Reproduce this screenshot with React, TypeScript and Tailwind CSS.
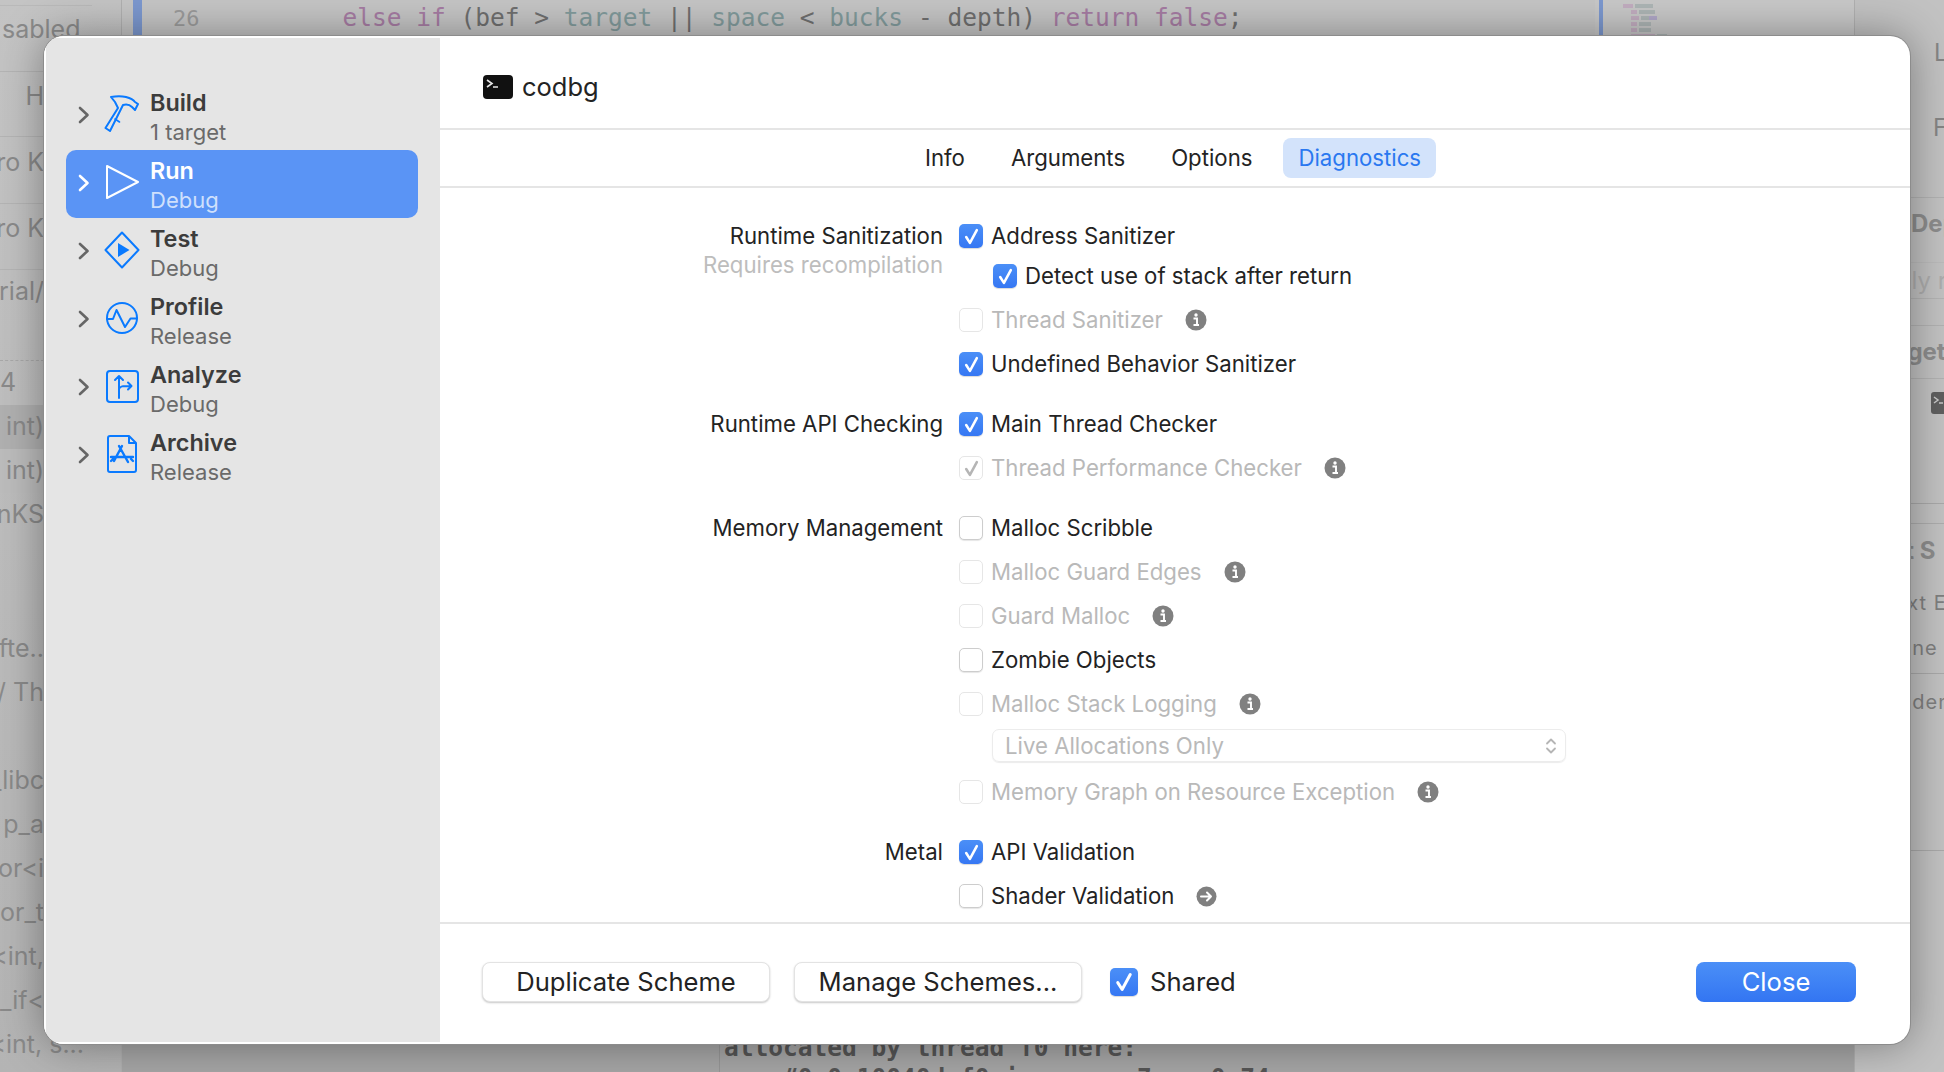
const side: { text: string; cls: string }[] = [
  { text: '', cls: 'h-[5px] w-[44px]' },
  { text: 'sabled', cls: 'h-[48px] w-[92px] !justify-start pl-[2px] border-t border-[#b9b9b9]' },
  { text: '', cls: 'h-[18px] w-[44px]' },
  { text: 'H', cls: 'h-[50px] w-[44px] border-t border-[#b4b4b4]' },
  { text: '', cls: 'h-[15px] w-[44px]' },
  { text: 'ro K', cls: 'h-[52px] w-[44px] border-t border-[#b4b4b4]' },
  { text: '', cls: 'h-[15px] w-[44px]' },
  { text: 'ro K', cls: 'h-[50px] w-[44px] border-t border-[#b4b4b4]' },
  { text: '', cls: 'h-[16px] w-[44px]' },
  { text: 'erial/', cls: 'h-[44px] w-[44px] border-t border-[#b4b4b4]' },
  { text: '', cls: 'h-[47px] w-[44px]' },
  { text: '4', cls: 'h-[45px] w-[44px] border-t border-dashed border-[#a8a8a8] !justify-start' },
  { text: ' int)', cls: 'h-[44px] w-[44px] bg-[#b0b0b0]' },
  { text: ' int)', cls: 'h-[44px] w-[44px] bg-[#bcbcbc]' },
  { text: 'nKS', cls: 'h-[44px] w-[44px]' },
  { text: '', cls: 'h-[90px] w-[44px]' },
  { text: 'fte..', cls: 'h-[44px] w-[44px]' },
  { text: '/ Th', cls: 'h-[44px] w-[44px]' },
  { text: '', cls: 'h-[44px] w-[44px]' },
  { text: '_libc', cls: 'h-[44px] w-[44px]' },
  { text: 'p_a', cls: 'h-[44px] w-[44px]' },
  { text: 'or<i', cls: 'h-[44px] w-[44px]' },
  { text: 'or_t', cls: 'h-[44px] w-[44px]' },
  { text: '<int,', cls: 'h-[44px] w-[44px]' },
  { text: '_if<', cls: 'h-[44px] w-[44px]' },
  { text: '<int, s...', cls: 'h-[44px] w-[84px]' },
]

const inspector: { text: string; cls: string }[] = [
  { text: '', cls: 'h-[30px]' },
  { text: 'L', cls: 'h-[46px] pl-[79px] text-[#858585]' },
  { text: '', cls: 'h-[30px]' },
  { text: 'F', cls: 'h-[44px] pl-[78px] text-[#858585]' },
  { text: '', cls: 'h-[47px]' },
  { text: 'Dependencies', cls: 'h-[52px] pl-[56px] font-bold text-[#8d8d8d] border-t border-[#b2b2b2]' },
  { text: '', cls: 'h-[13px]' },
  { text: 'Only read', cls: 'h-[36px] pl-[24px] text-[#adadad] border-t border-[#bbbbbb]' },
  { text: '', cls: 'h-[27px] border-t border-[#b4b4b4]' },
  { text: 'Target', cls: 'h-[53px] pl-[15px] font-bold text-[#8d8d8d] border-t border-[#b2b2b2]' },
  { text: '', cls: 'h-[14px] border-t border-[#b2b2b2]' },
]

const inspectorLow: { text: string; cls: string }[] = [
  { text: 'Text S', cls: 'h-[54px] pl-[8px] font-bold text-[#8d8d8d] border-t border-[#adadad]' },
  { text: 'Next Er', cls: 'h-[52px] pl-[24px] text-[#7f7f7f] !text-[20px] tracking-wider' },
  { text: 'Line E', cls: 'h-[38px] pl-[39px] text-[#7f7f7f] !text-[20px] tracking-wider' },
  { text: '', cls: 'h-[6px]' },
  { text: 'Identi', cls: 'h-[56px] pl-[51px] text-[#7f7f7f] !text-[20px] tracking-wider border-t border-[#a9a9a9]' },
  { text: '', cls: 'h-[122px] border-b border-[#a9a9a9]' },
]

type Row = {
  label: string
  state: 'on' | 'off'
  disabled?: boolean
  hint?: 'info' | 'arrow'
  cls?: string
}

function Chevron({ selected }: { selected?: boolean }) {
  return (
    <svg width="12" height="18" viewBox="0 0 12 18" className="ml-[12px] -mt-[2px] shrink-0">
      <path
        d="M2 2 L9.5 9 L2 16"
        fill="none"
        stroke={selected ? '#ffffff' : '#666666'}
        strokeWidth="2.6"
        strokeLinecap="round"
        strokeLinejoin="round"
      />
    </svg>
  )
}

function ActionIcon({ name }: { name: string }) {
  const common = { fill: 'none', stroke: '#0a7aff', strokeWidth: 2, strokeLinejoin: 'round' as const, strokeLinecap: 'round' as const }
  if (name === 'Build') {
    return (
      <svg width="36" height="38" viewBox="0 0 36 38">
        <path {...common} d="M7 2 C12 1 18 1 22 2 C26 3 29 4 31 7 L34 9 L31 15 L28 12 C26 10 23 9 19 10 L6 36 L1.5 33 L14 13 L11 7 Z" />
        <path {...common} d="M11 24 L15.5 27" strokeWidth="1.6" />
      </svg>
    )
  }
  if (name === 'Run') {
    return (
      <svg width="36" height="38" viewBox="0 0 36 38">
        <path d="M3 3 L34 19 L3 35 Z" fill="none" stroke="#ffffff" strokeWidth="2" strokeLinejoin="round" />
      </svg>
    )
  }
  if (name === 'Test') {
    return (
      <svg width="36" height="38" viewBox="0 0 36 38">
        <path {...common} d="M18 1.5 L34.5 19 L18 36.5 L1.5 19 Z" />
        <path d="M14 12 L25.5 19 L14 26 Z" fill="#0a7aff" />
      </svg>
    )
  }
  if (name === 'Profile') {
    return (
      <svg width="36" height="36" viewBox="0 0 36 36">
        <circle {...common} cx="18" cy="18" r="15" />
        <path {...common} d="M3 19 L9 19 L12.5 10 L21 27 L26.5 18.5 L33 18.5" />
      </svg>
    )
  }
  if (name === 'Analyze') {
    return (
      <svg width="36" height="36" viewBox="0 0 36 36">
        <rect {...common} x="3" y="3" width="31" height="31" rx="3" />
        <path {...common} d="M15 8 L15 30 M11 12 L15 8 L19 12 M15 21 C16 18 18 18 27 18 M24 14.5 L27.5 18 L24 21.5" />
      </svg>
    )
  }
  return (
    <svg width="36" height="40" viewBox="0 0 36 40">
      <path {...common} d="M6 2 L25 2 L32 9 L32 36 C32 37.5 31 38 30 38 L6 38 C5 38 4 37.5 4 36 L4 4 C4 2.5 5 2 6 2 Z M25 2 L25 9 L32 9" />
      <path {...common} d="M18 12 L10 27 M15 12 L24 28 M7 23 L29 23 M7 27 L9 25 M29 27 L27 25" strokeWidth="2.4" />
    </svg>
  )
}

function SchemeAction({ name, sub, selected }: { name: string; sub: string; selected?: boolean }) {
  return (
    <div className={`flex h-[68px] items-center rounded-[10px] ${selected ? 'bg-[#5a94f5]' : ''}`}>
      <Chevron selected={selected} />
      <div className="ml-[14px] flex h-[40px] w-[36px] shrink-0 items-center justify-center -mt-1">
        <ActionIcon name={name} />
      </div>
      <div className="ml-[10px] pt-[2px]">
        <div className={`h-[29px] text-[23.4px] leading-[28px] font-semibold ${selected ? 'text-white' : 'text-[#3c3c3c]'}`}>{name}</div>
        <div className={`h-[28px] text-[22px] leading-[28px] ${selected ? 'text-[#cfe0fc]' : 'text-[#6a6a6a]'}`}>{sub}</div>
      </div>
    </div>
  )
}

function Checkbox({ state, disabled, large }: { state: 'on' | 'off'; disabled?: boolean; large?: boolean }) {
  const size = large ? 'h-[28px] w-[28px]' : 'h-[24px] w-[24px]'
  const tick = large ? 20 : 17
  if (state === 'on' && !disabled) {
    return (
      <span className={`${size} flex shrink-0 items-center justify-center rounded-[5px] bg-gradient-to-b from-[#4b8ff7] to-[#3677f3] shadow-[0_1px_1px_rgba(0,0,0,0.15)]`}>
        <svg width={tick} height={tick} viewBox="0 0 16 16">
          <path d="M3 8.5 L6.5 14 L13 2" fill="none" stroke="#fff" strokeWidth="2.4" strokeLinecap="round" strokeLinejoin="round" />
        </svg>
      </span>
    )
  }
  return (
    <span
      className={`${size} flex shrink-0 items-center justify-center rounded-[5px] border bg-white ${
        disabled ? 'border-[#e6e6e6]' : 'border-[#cdcdcd] shadow-[0_1px_1px_rgba(0,0,0,0.1)]'
      }`}
    >
      {state === 'on' && (
        <svg width={tick} height={tick} viewBox="0 0 16 16">
          <path d="M3 8.5 L6.5 14 L13 2" fill="none" stroke="#b5b5b5" strokeWidth="2.4" strokeLinecap="round" strokeLinejoin="round" />
        </svg>
      )}
    </span>
  )
}

function Hint({ kind }: { kind: 'info' | 'arrow' }) {
  if (kind === 'arrow') {
    return (
      <svg width="21" height="21" viewBox="0 0 21 21" className="ml-[22px] shrink-0">
        <circle cx="10.5" cy="10.5" r="10" fill="#808080" />
        <path d="M5 10.5 L15 10.5 M11 6.5 L15 10.5 L11 14.5" fill="none" stroke="#fff" strokeWidth="2" strokeLinecap="round" strokeLinejoin="round" />
      </svg>
    )
  }
  return (
    <svg width="22" height="22" viewBox="0 0 22 22" className="ml-[22px] shrink-0">
      <circle cx="11" cy="11" r="10.5" fill="#808080" />
      <circle cx="11" cy="6" r="1.7" fill="#fff" />
      <path d="M8.5 9.5 L12 9.5 L12 15.5 M8.5 16 L14 16" fill="none" stroke="#fff" strokeWidth="1.9" />
    </svg>
  )
}

function OptionRow({ label, state, disabled, hint, cls = 'h-[44px]' }: Row) {
  return (
    <div className={`flex items-center ${cls}`}>
      <Checkbox state={state} disabled={disabled} />
      <span className={`ml-[8px] whitespace-nowrap ${disabled ? 'text-[#b9b9b9]' : 'text-[#232323]'}`}>{label}</span>
      {hint && <Hint kind={hint} />}
    </div>
  )
}

function Group({ label, note, first, children }: { label: string; note?: string; first?: string; children: React.ReactNode }) {
  return (
    <div className="flex">
      <div className="w-[503px] shrink-0 text-right">
        <div className={`flex items-center justify-end ${first ?? 'h-[44px]'}`}>
          <span className="text-[#232323]">{label}</span>
        </div>
        {note && <div className="-mt-[6px] h-[30px] leading-[30px] text-[#bdbdbd]">{note}</div>}
      </div>
      <div className="ml-[16px] flex flex-col">{children}</div>
    </div>
  )
}

function Tab({ label, active }: { label: string; active?: boolean }) {
  return (
    <div className={`flex h-[40px] items-center rounded-[8px] px-[15px] ${active ? 'bg-[#d3e3fb] text-[#2a78f0]' : 'text-[#232323]'}`}>{label}</div>
  )
}

export default function App() {
  return (
    <div className="relative h-[1072px] w-[1944px] overflow-hidden bg-[#c5c5c5] font-['Inter',sans-serif] text-[22.2px]">
      {/* dimmed editor behind the sheet */}
      <div className="flex h-full">
        <div className="flex w-[122px] shrink-0 flex-col border-r border-[#b0b0b0] bg-gradient-to-b from-[#c4c4c4] via-[#bcbcbc] to-[#b4b4b4] text-[25px] text-[#8a8a8a]">
          {side.map((s, i) => (
            <div key={i} className={`flex items-center justify-end overflow-hidden whitespace-pre ${s.cls}`}>
              {s.text}
            </div>
          ))}
        </div>
        <div className="flex min-w-0 flex-1 flex-col">
          <div className="flex h-[36px] shrink-0 items-center">
            <div className="ml-[11px] h-full w-[9px] bg-[#7c98cf]" />
            <span className="ml-[31px] pt-[1px] font-['DejaVu_Sans_Mono',monospace] text-[22px] text-[#9b9b9b]">26</span>
            <pre className="ml-[143px] pt-[1px] font-['DejaVu_Sans_Mono',monospace] text-[24.5px] text-[#6f6f6f]">
              <span className="text-[#a67ca3]">else if</span> (bef &gt; <span className="text-[#829b9c]">target</span> || <span className="text-[#829b9c]">space</span> &lt;{' '}
              <span className="text-[#829b9c]">bucks</span> - depth) <span className="text-[#a67ca3]">return false</span>;
            </pre>
          </div>
          <div className="flex-1 bg-[#c5c5c5]" />
          <div className="flex h-[92px] shrink-0 bg-[#a6a6a6]">
            <div className="w-[597px] shrink-0" />
            <pre className="flex-1 border-l border-[#969696] pt-[53px] pl-[4px] font-['DejaVu_Sans_Mono',monospace] text-[24.5px] leading-[30px] font-bold text-[#555555]">
              {'allocated by thread T0 here:\n    #0 0x10040daf0 in wmem..7zmm:0x74'}
            </pre>
          </div>
        </div>
        <div className="flex w-[260px] shrink-0 flex-col border-r border-[#b0b0b0] bg-[#c8c8c8]">
          <div className="ml-[4px] h-[36px] border-l-[4px] border-[#7c98cf]">
            <svg width="70" height="36" viewBox="0 0 70 36" className="ml-[16px]">
              <path d="M4 4h10v4H4zM12 10h6v4h-6zM12 16h8v4h-8zM12 22h6v4h-6zM12 28h6v4h-6zM12 34h24v2H12z" fill="#c2adc0" />
              <path d="M16 4h18v4H16zM20 10h16v4H20zM22 16h8v4h-8zM20 22h12v4H20zM20 28h12v4H20zM38 34h10v2H38z" fill="#adb5b5" />
              <path d="M30 16h8v4h-8z" fill="#b0a8c8" />
            </svg>
          </div>
          <div className="flex-1" />
          <div className="h-[28px] bg-[#a6a6a6]" />
        </div>
        <div className="flex w-[89px] shrink-0 flex-col overflow-hidden bg-[#c2c2c2] text-[24px] whitespace-nowrap">
          {inspector.map((s, i) => (
            <div key={i} className={`flex items-center ${s.cls}`}>
              {s.text}
            </div>
          ))}
          <div className="flex h-[22px] items-start pl-[76px]">
            <svg width="28" height="22" viewBox="0 0 28 22" className="shrink-0">
              <rect width="28" height="22" rx="3" fill="#5f5f5f" />
              <path d="M3 5 L7 8 L3 11 M8 11 L12 11" fill="none" stroke="#c8c8c8" strokeWidth="1.5" />
            </svg>
          </div>
          <div className="h-[90px] border-b border-[#a9a9a9]" />
          <div className="h-[19px]" />
          {inspectorLow.map((s, i) => (
            <div key={i} className={`flex shrink-0 items-center ${s.cls}`}>
              {s.text}
            </div>
          ))}
        </div>
      </div>

      {/* scheme sheet */}
      <div className="absolute top-[36px] left-[44px] flex h-[1008px] w-[1866px] overflow-hidden rounded-[20px] bg-white text-[#232323] shadow-[0_0_0_1px_#8c8c8c,0_0_44px_rgba(0,0,0,0.38)]">
        <aside className="w-[396px] shrink-0 border-t-2 border-b-2 border-l-2 border-white bg-[#e5e5e5] pt-[44px] pr-[22px] pl-[20px]">
          <SchemeAction name="Build" sub="1 target" />
          <SchemeAction name="Run" sub="Debug" selected />
          <SchemeAction name="Test" sub="Debug" />
          <SchemeAction name="Profile" sub="Release" />
          <SchemeAction name="Analyze" sub="Debug" />
          <SchemeAction name="Archive" sub="Release" />
        </aside>
        <main className="flex min-w-0 flex-1 flex-col">
          <header className="flex h-[94px] shrink-0 items-center border-b-2 border-[#e5e5e5] pt-[10px] pl-[43px]">
            <svg width="30" height="24" viewBox="0 0 30 24">
              <rect width="30" height="24" rx="4" fill="#111111" />
              <path d="M4 5 L9 8.5 L4 12 M10 12 L15 12" fill="none" stroke="#e8e8e8" strokeWidth="1.6" />
            </svg>
            <span className="ml-[9px] text-[25.5px] text-[#232323]">codbg</span>
          </header>
          <nav className="flex h-[58px] shrink-0 items-center justify-center gap-[16px] border-b-2 border-[#e5e5e5] pr-[4px]">
            <Tab label="Info" />
            <Tab label="Arguments" />
            <Tab label="Options" />
            <Tab label="Diagnostics" active />
          </nav>
          <section className="flex h-[734px] shrink-0 flex-col gap-[16px] pt-[28px]">
            <Group label="Runtime Sanitization" note="Requires recompilation" first="h-[40px]">
              <OptionRow label="Address Sanitizer" state="on" cls="h-[40px]" />
              <div className="mb-[2px] ml-[34px]">
                <OptionRow label="Detect use of stack after return" state="on" cls="h-[40px]" />
              </div>
              <OptionRow label="Thread Sanitizer" state="off" disabled hint="info" />
              <OptionRow label="Undefined Behavior Sanitizer" state="on" />
            </Group>
            <Group label="Runtime API Checking">
              <OptionRow label="Main Thread Checker" state="on" />
              <OptionRow label="Thread Performance Checker" state="on" disabled hint="info" />
            </Group>
            <Group label="Memory Management">
              <OptionRow label="Malloc Scribble" state="off" />
              <OptionRow label="Malloc Guard Edges" state="off" disabled hint="info" />
              <OptionRow label="Guard Malloc" state="off" disabled hint="info" />
              <OptionRow label="Zombie Objects" state="off" />
              <OptionRow label="Malloc Stack Logging" state="off" disabled hint="info" />
              <div className="mt-[3px] ml-[33px] flex h-[33px] w-[574px] items-center justify-between rounded-[7px] border border-[#ececec] pr-[8px] pl-[12px] text-[#b9b9b9] shadow-[0_1px_1px_rgba(0,0,0,0.08)]">
                <span>Live Allocations Only</span>
                <svg width="12" height="18" viewBox="0 0 12 18">
                  <path d="M2 6.5 L6 2.5 L10 6.5 M2 11.5 L6 15.5 L10 11.5" fill="none" stroke="#b5b5b5" strokeWidth="1.8" strokeLinecap="round" strokeLinejoin="round" />
                </svg>
              </div>
              <div className="mt-[8px]">
                <OptionRow label="Memory Graph on Resource Exception" state="off" disabled hint="info" />
              </div>
            </Group>
            <Group label="Metal">
              <OptionRow label="API Validation" state="on" />
              <OptionRow label="Shader Validation" state="off" hint="arrow" />
            </Group>
          </section>
          <footer className="flex flex-1 items-start border-t-2 border-[#e5e5e5] pt-[38px] pr-[54px] pl-[42px] text-[25.6px]">
            <button className="h-[40px] w-[288px] rounded-[8px] border border-[#e3e3e3] bg-white text-[#232323] shadow-[0_1px_2px_rgba(0,0,0,0.22)]">Duplicate Scheme</button>
            <button className="ml-[24px] h-[40px] w-[288px] rounded-[8px] border border-[#e3e3e3] bg-white text-[#232323] shadow-[0_1px_2px_rgba(0,0,0,0.22)]">Manage Schemes...</button>
            <div className="ml-[28px] flex h-[40px] items-center">
              <Checkbox state="on" large />
              <span className="ml-[12px]">Shared</span>
            </div>
            <button className="ml-auto h-[40px] w-[160px] rounded-[8px] bg-gradient-to-b from-[#4b8ff7] to-[#3375f2] text-white">Close</button>
          </footer>
        </main>
      </div>
    </div>
  )
}
